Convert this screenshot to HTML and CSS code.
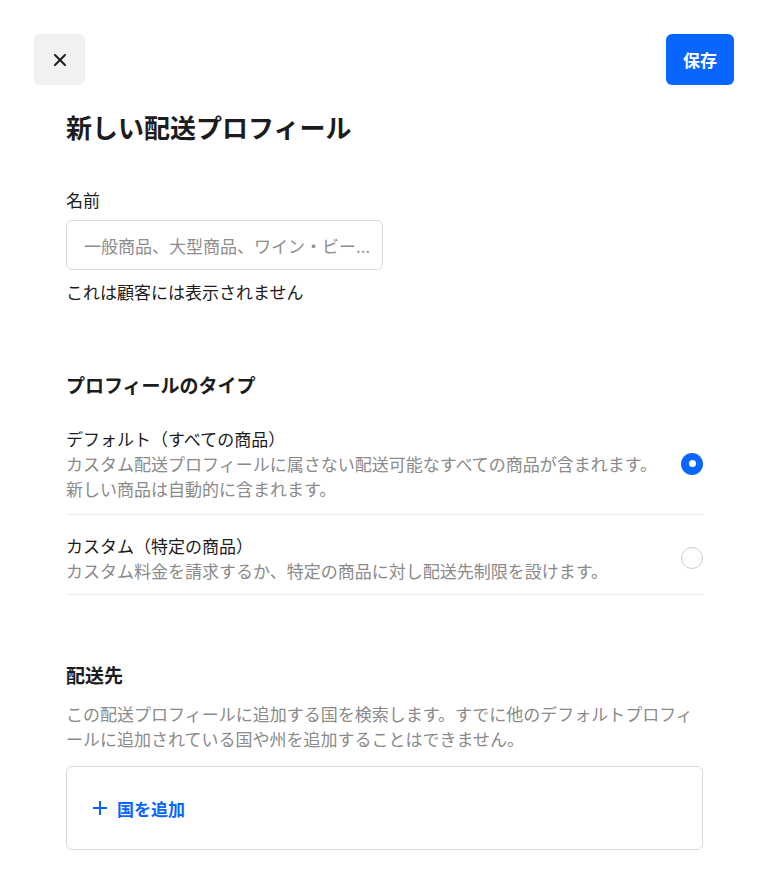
FILE: index.html
```html
<!DOCTYPE html>
<html lang="ja">
<head>
    <meta charset="UTF-8">
    <meta name="viewport" content="width=device-width, initial-scale=1.0">
    <title>新しい配送プロフィール</title>
    <link rel="stylesheet" href="styles.css">
</head>
<body>
    <div class="top-bar">
        <button class="close-btn" aria-label="閉じる">
            <svg width="14" height="14" viewBox="0 0 14 14" fill="none" stroke="#1c1c1c" stroke-width="2" stroke-linecap="round">
                <path d="M2 2L12 12"></path>
                <path d="M12 2L2 12"></path>
            </svg>
        </button>
        <button class="save-btn">保存</button>
    </div>

    <div class="content">
        <h1 class="page-title">新しい配送プロフィール</h1>

        <!-- 名前 -->
        <div class="field">
            <label class="field-label" for="nameInput">名前</label>
            <input type="text" id="nameInput" class="text-input" placeholder="一般商品、大型商品、ワイン・ビー..." />
            <p class="field-help">これは顧客には表示されません</p>
        </div>

        <!-- プロフィールのタイプ -->
        <section class="section type-section">
            <h2 class="section-title">プロフィールのタイプ</h2>
            <div class="option">
                <div class="option-text">
                    <div class="option-title">デフォルト（すべての商品）</div>
                    <div class="option-desc">カスタム配送プロフィールに属さない配送可能なすべての商品が含まれます。新しい商品は自動的に含まれます。</div>
                </div>
                <span class="radio checked"></span>
            </div>
            <div class="option">
                <div class="option-text">
                    <div class="option-title">カスタム（特定の商品）</div>
                    <div class="option-desc">カスタム料金を請求するか、特定の商品に対し配送先制限を設けます。</div>
                </div>
                <span class="radio"></span>
            </div>
        </section>

        <!-- 配送先 -->
        <section class="section dest-section">
            <h2 class="section-title">配送先</h2>
            <p class="section-desc">この配送プロフィールに追加する国を検索します。すでに他のデフォルトプロフィールに追加されている国や州を追加することはできません。</p>
            <div class="dest-box">
                <button class="add-country">
                    <svg width="16" height="16" viewBox="0 0 16 16" fill="none" stroke="#0866ff" stroke-width="2">
                        <path d="M8 1V15"></path>
                        <path d="M1 8H15"></path>
                    </svg>
                    国を追加
                </button>
            </div>
        </section>
    </div>
</body>
</html>
```

FILE: styles.css
```css
* {
    box-sizing: border-box;
    margin: 0;
    padding: 0;
}

body {
    font-family: "Noto Sans CJK JP", "Noto Sans", sans-serif;
    background-color: #ffffff;
    color: #1c1c1c;
    width: 768px;
}

/* 上部バー */
.top-bar {
    display: flex;
    justify-content: space-between;
    align-items: center;
    padding: 34px 34px 0 34px;
}

.close-btn {
    width: 51px;
    height: 51px;
    border: none;
    border-radius: 6px;
    background-color: #f1f1f1;
    display: flex;
    align-items: center;
    justify-content: center;
    cursor: pointer;
}

.save-btn {
    width: 68px;
    height: 51px;
    border: none;
    border-radius: 6px;
    background-color: #0866ff;
    color: #ffffff;
    font-family: inherit;
    font-size: 17px;
    font-weight: bold;
    cursor: pointer;
}

/* 本文 */
.content {
    padding: 0 65px 0 66px;
}

.page-title {
    font-size: 26px;
    font-weight: bold;
    line-height: 36px;
    margin-top: 24px;
}

.field {
    margin-top: 42px;
}

.field-label {
    display: block;
    font-size: 17px;
    line-height: 25px;
}

.text-input {
    display: block;
    width: 317px;
    height: 50px;
    margin-top: 8px;
    padding: 0 6px 0 17px;
    border: 1px solid #dadada;
    border-radius: 6px;
    font-family: inherit;
    font-size: 17px;
    color: #1c1c1c;
    outline: none;
}

.text-input::placeholder {
    color: #8d8d8d;
}

.field-help {
    font-size: 17px;
    line-height: 25px;
    margin-top: 9px;
}

/* セクション */
.type-section {
    margin-top: 67px;
}

.section-title {
    font-size: 19px;
    font-weight: bold;
    line-height: 28px;
}

.option {
    display: flex;
    align-items: center;
    gap: 20px;
    padding: 18px 0 11px 0;
    border-bottom: 1px solid #ececec;
}

.type-section .section-title + .option {
    padding: 27px 0 13px 0;
}

.option-text {
    flex: 1;
}

.option-title {
    font-size: 17px;
    line-height: 25px;
}

.option-desc {
    font-size: 17px;
    line-height: 25px;
    color: #8a8a8a;
}

/* ラジオボタン */
.radio {
    width: 22px;
    height: 22px;
    border-radius: 50%;
    border: 1.5px solid #cfcfcf;
    flex-shrink: 0;
    display: flex;
    align-items: center;
    justify-content: center;
}

.radio.checked {
    border: none;
    background-color: #0866ff;
}

.radio.checked::after {
    content: "";
    width: 7px;
    height: 7px;
    border-radius: 50%;
    background-color: #ffffff;
}

/* 配送先 */
.dest-section {
    margin-top: 66px;
}

.section-desc {
    font-size: 17px;
    line-height: 25px;
    color: #8a8a8a;
    margin-top: 12px;
}

.dest-box {
    margin-top: 15px;
    height: 84px;
    border: 1px solid #dadada;
    border-radius: 6px;
    display: flex;
    align-items: center;
    padding: 0 25px;
}

.add-country {
    display: flex;
    align-items: center;
    gap: 9px;
    border: none;
    background: none;
    color: #0866ff;
    font-family: inherit;
    font-size: 17px;
    font-weight: bold;
    cursor: pointer;
}
```
